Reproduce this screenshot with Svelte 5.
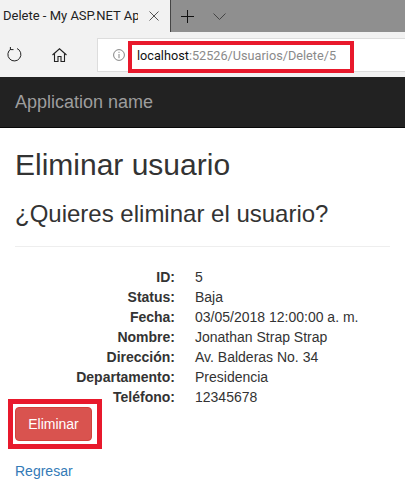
<script lang="ts">
  const fields = [
    ['ID:', '5'],
    ['Status:', 'Baja'],
    ['Fecha:', '03/05/2018 12:00:00 a. m.'],
    ['Nombre:', 'Jonathan Strap Strap'],
    ['Dirección:', 'Av. Balderas No. 34'],
    ['Departamento:', 'Presidencia'],
    ['Teléfono:', '12345678']
  ];
</script>

<div class="page">
  <div class="tabstrip">
    <div class="tab">
      <span class="tab-title">Delete - My ASP.NET Application</span>
      <svg class="tab-close" width="10" height="10" viewBox="0 0 10 10" fill="none" stroke="#555" stroke-width="1">
        <path d="M0.5 0.5 L9.5 9.5 M9.5 0.5 L0.5 9.5" />
      </svg>
    </div>
    <svg class="new-tab" width="13" height="13" viewBox="0 0 13 13" fill="none" stroke="#111" stroke-width="1">
      <path d="M6.5 0 V13 M0 6.5 H13" />
    </svg>
    <svg class="tab-menu" width="13" height="7" viewBox="0 0 13 7" fill="none" stroke="#444" stroke-width="1">
      <path d="M0.5 0.5 L6.5 6.5 L12.5 0.5" />
    </svg>
  </div>

  <div class="toolbar">
    <svg class="reload" width="15" height="15" viewBox="0 0 15 15" fill="none" stroke="#222" stroke-width="1">
      <path d="M4 1.9 A6.5 6.5 0 1 0 10 1.5" />
      <path d="M3.4 0 V2.6 H6.5" />
    </svg>
    <svg class="home" width="15" height="14" viewBox="0 0 15 14" fill="none" stroke="#222" stroke-width="1.1">
      <path d="M0.5 7 L7.5 0.8 L14.5 7" />
      <path d="M2.5 5.5 V13.5 H6 V8.5 H9 V13.5 H12.5 V5.5" />
    </svg>
    <div class="address">
      <svg class="info" width="12" height="12" viewBox="0 0 12 12" fill="none" stroke="#777" stroke-width="0.9">
        <circle cx="6" cy="6" r="5.4" />
        <path d="M6 5 V9.2 M6 2.8 V3.9" />
      </svg>
      <div class="url-mark">
        <span class="host">localhost</span><span class="rest">:52526/Usuarios/Delete/5</span>
      </div>
    </div>
  </div>

  <div class="navbar">Application name</div>

  <main class="content">
    <h2>Eliminar usuario</h2>
    <h3>¿Quieres eliminar el usuario?</h3>
    <hr />
    <dl>
      {#each fields as [label, value]}
        <dt>{label}</dt>
        <dd>{value}</dd>
      {/each}
    </dl>
    <div class="btn-wrap">
      <button type="button" class="btn-danger">Eliminar</button>
    </div>
    <a class="back" href="#top">Regresar</a>
  </main>
</div>

<style>
  :global(body) {
    margin: 0;
    background: #fff;
  }

  .page {
    width: 405px;
    height: 492px;
    overflow: hidden;
    font-family: "Liberation Sans", Arial, sans-serif;
    font-size: 14px;
    line-height: 20px;
    color: #333;
  }

  .tabstrip {
    display: flex;
    align-items: center;
    height: 32px;
    background: #8f8f8f;
  }

  .tab {
    display: flex;
    align-items: center;
    box-sizing: border-box;
    width: 171px;
    height: 32px;
    padding-left: 3px;
    background: #f2f2f2;
    border-right: 1px solid #444;
  }

  .tab-title {
    width: 135px;
    overflow: hidden;
    white-space: nowrap;
    font-family: Roboto, sans-serif;
    font-size: 13px;
    color: #222;
  }

  .tab-close {
    margin-left: 11px;
  }

  .new-tab {
    margin-left: 10px;
  }

  .tab-menu {
    margin-left: 19px;
    margin-top: 1px;
  }

  .toolbar {
    display: flex;
    align-items: center;
    box-sizing: border-box;
    height: 45px;
    padding: 5px 0 5px 7px;
    background: #f2f2f2;
  }

  .home {
    margin-left: 30px;
  }

  .address {
    flex: 1;
    display: flex;
    align-items: center;
    box-sizing: border-box;
    height: 34px;
    margin-left: 30px;
    padding-left: 15px;
    background: #fff;
    border: 1px solid #ddd;
    border-right: none;
  }

  .url-mark {
    align-self: flex-start;
    box-sizing: border-box;
    width: 226px;
    height: 32px;
    margin-top: 2px;
    margin-left: 3px;
    padding-left: 5px;
    border: 4px solid #e8192c;
    font-family: Roboto, sans-serif;
    font-size: 12.7px;
    line-height: 21px;
    white-space: nowrap;
  }

  .host {
    color: #111;
  }

  .rest {
    color: #8a8a8a;
  }

  .navbar {
    box-sizing: border-box;
    height: 51px;
    padding: 15px;
    background: #222;
    border-bottom: 1px solid #080808;
    font-size: 18px;
    color: #9d9d9d;
  }

  .content {
    padding: 0 15px;
  }

  h2 {
    margin: 20px 0 10px;
    font-size: 30px;
    font-weight: 500;
    line-height: 33px;
  }

  h3 {
    margin: 20px 0 10px;
    font-size: 24px;
    font-weight: 500;
    line-height: 26px;
    color: #333;
  }

  hr {
    margin: 19px 0 20px;
    border: 0;
    border-top: 1px solid #eee;
  }

  dl {
    display: grid;
    grid-template-columns: 160px 1fr;
    column-gap: 20px;
    margin: 0;
  }

  dt {
    font-weight: 700;
    text-align: right;
  }

  dd {
    margin: 0;
  }

  .btn-wrap {
    position: relative;
    width: 77px;
  }

  /* red annotation drawn over the button */
  .btn-wrap::after {
    content: "";
    position: absolute;
    inset: -8px -10px -8px -7px;
    border: 5px solid #e8192c;
    pointer-events: none;
  }

  .btn-danger {
    display: block;
    box-sizing: border-box;
    width: 77px;
    height: 34px;
    padding: 0;
    background: #d9534f;
    border: 1px solid #d43f3a;
    border-radius: 4px;
    font-family: inherit;
    font-size: 14px;
    color: #fff;
  }

  .back {
    display: block;
    margin-top: 20px;
    color: #337ab7;
    text-decoration: none;
  }
</style>
